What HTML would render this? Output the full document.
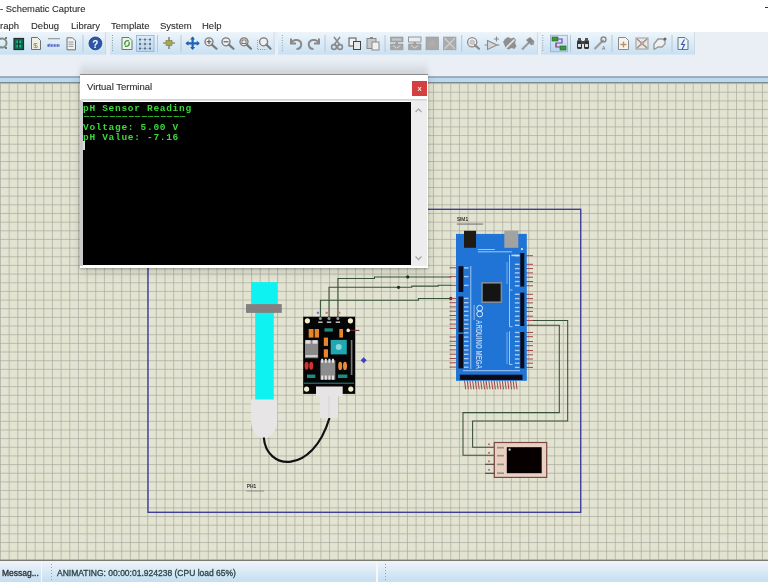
<!DOCTYPE html>
<html><head><meta charset="utf-8">
<style>
html,body{margin:0;padding:0;}
body{width:768px;height:582px;overflow:hidden;position:relative;background:#fff;font-family:"Liberation Sans",sans-serif;}
#wrap{position:absolute;left:0;top:0;width:768px;height:582px;background:#fff;filter:blur(0.35px);}
.a{position:absolute;}
.t{position:absolute;white-space:nowrap;color:#222;}
.term{position:absolute;left:83px;font-family:"Liberation Mono",monospace;font-weight:bold;font-size:9.5px;letter-spacing:0.7px;line-height:10px;color:#3ad83a;white-space:pre;}
</style></head><body><div id="wrap">
<div class="t" style="left:0;top:3px;font-size:9.4px;color:#2a2a2a;-webkit-text-stroke:0.08px #2a2a2a;">- Schematic Capture</div>
<div class="a" style="left:764.5px;top:7px;width:4px;height:1.2px;background:#333;"></div>
<div class="t" style="left:0;top:20px;font-size:9.5px;color:#2a2a2a;-webkit-text-stroke:0.08px #2a2a2a;">raph</div>
<div class="t" style="left:31px;top:20px;font-size:9.5px;color:#2a2a2a;-webkit-text-stroke:0.08px #2a2a2a;">Debug</div>
<div class="t" style="left:71px;top:20px;font-size:9.5px;color:#2a2a2a;-webkit-text-stroke:0.08px #2a2a2a;">Library</div>
<div class="t" style="left:111px;top:20px;font-size:9.5px;color:#2a2a2a;-webkit-text-stroke:0.08px #2a2a2a;">Template</div>
<div class="t" style="left:160px;top:20px;font-size:9.5px;color:#2a2a2a;-webkit-text-stroke:0.08px #2a2a2a;">System</div>
<div class="t" style="left:202px;top:20px;font-size:9.5px;color:#2a2a2a;-webkit-text-stroke:0.08px #2a2a2a;">Help</div>
<div class="a" style="left:0;top:31.7px;width:768px;height:45.5px;background:#e9eff4;"></div>
<svg class="a" style="left:0;top:0" width="768" height="582" viewBox="0 0 768 582">
<defs><linearGradient id="tbg" x1="0" y1="0" x2="0" y2="1"><stop offset="0" stop-color="#eef5fb"/><stop offset="1" stop-color="#c9e0f2"/></linearGradient><linearGradient id="hbg" x1="0" y1="0" x2="0" y2="1"><stop offset="0" stop-color="#dbeaf7"/><stop offset="1" stop-color="#b9d6ef"/></linearGradient></defs><rect x="0" y="32.2" width="106" height="22.4" fill="url(#tbg)"/><rect x="105.2" y="32.2" width="0.8" height="22.4" fill="#c6d6e2"/><rect x="110.2" y="32.2" width="164.3" height="22.4" fill="url(#tbg)"/><rect x="273.7" y="32.2" width="0.8" height="22.4" fill="#c6d6e2"/><rect x="278.1" y="32.2" width="259.9" height="22.4" fill="url(#tbg)"/><rect x="537.2" y="32.2" width="0.8" height="22.4" fill="#c6d6e2"/><rect x="541" y="32.2" width="153.79999999999995" height="22.4" fill="url(#tbg)"/><rect x="694.0" y="32.2" width="0.8" height="22.4" fill="#c6d6e2"/><circle cx="2" cy="43" r="4.5" fill="none" stroke="#7d8f80" stroke-width="2"/><circle cx="6" cy="38" r="1" fill="#556"/><circle cx="6" cy="48" r="1" fill="#556"/><rect x="14" y="38.5" width="9.5" height="11" fill="#0d6e50" stroke="#203030" stroke-width="1.2"/><rect x="16.5" y="40.5" width="4.5" height="7" fill="#19b889"/><path d="M18.7 40v8M16 44h5.5" stroke="#0a2a20" stroke-width="1"/><path d="M31.5 37.5h6l3 3v9h-9z" fill="#f2f0e2" stroke="#707070" stroke-width="1"/><text x="33.3" y="47.5" font-size="8" font-family="Liberation Sans" fill="#80804a">$</text><rect x="48" y="38" width="12" height="1.3" fill="#9aa2a6"/><path d="M47.5 45.5h12.5" stroke="#5366c4" stroke-width="2.4" stroke-dasharray="2.2 0.8"/><path d="M48 45.5l2-2" stroke="#5366c4" stroke-width="1"/><path d="M67 37.8h5.5l3 3v9h-8.5z" fill="#f2f2f2" stroke="#707070" stroke-width="1"/><path d="M68.5 42h5M68.5 44.2h5M68.5 46.4h5" stroke="#8a8a8a" stroke-width="0.9"/><rect x="82.5" y="35" width="1" height="17" fill="#b8c8d4"/><circle cx="95.4" cy="43.4" r="6.4" fill="#2e56a6"/><circle cx="95.4" cy="43.4" r="6.4" fill="none" stroke="#1c3c80" stroke-width="0.8"/><text x="92.2" y="47.5" font-size="10" font-weight="bold" font-family="Liberation Sans" fill="#fff">?</text><rect x="112.0" y="35.0" width="1" height="1" fill="#8aa0b0"/><rect x="112.0" y="37.5" width="1" height="1" fill="#8aa0b0"/><rect x="112.0" y="40.0" width="1" height="1" fill="#8aa0b0"/><rect x="112.0" y="42.5" width="1" height="1" fill="#8aa0b0"/><rect x="112.0" y="45.0" width="1" height="1" fill="#8aa0b0"/><rect x="112.0" y="47.5" width="1" height="1" fill="#8aa0b0"/><rect x="112.0" y="50.0" width="1" height="1" fill="#8aa0b0"/><path d="M122 37.5h7l3 3v9h-10z" fill="#eef4e8" stroke="#6d7570" stroke-width="1"/><path d="M125 45a3 3 0 0 1 4-4M129 42a3 3 0 0 1-4 4" stroke="#3f9a3f" stroke-width="1.4" fill="none"/><rect x="136.5" y="35.5" width="17.5" height="16" fill="url(#hbg)" stroke="#8db2d0" stroke-width="0.8"/><circle cx="140.0" cy="39.5" r="0.9" fill="#2a3a4a"/><circle cx="140.0" cy="44.0" r="0.9" fill="#2a3a4a"/><circle cx="140.0" cy="48.5" r="0.9" fill="#2a3a4a"/><circle cx="145.0" cy="39.5" r="0.9" fill="#2a3a4a"/><circle cx="145.0" cy="44.0" r="0.9" fill="#2a3a4a"/><circle cx="145.0" cy="48.5" r="0.9" fill="#2a3a4a"/><circle cx="150.0" cy="39.5" r="0.9" fill="#2a3a4a"/><circle cx="150.0" cy="44.0" r="0.9" fill="#2a3a4a"/><circle cx="150.0" cy="48.5" r="0.9" fill="#2a3a4a"/><path d="M140 39.5h10M140 44h10M140 48.5h10M140 39.5v9M145 39.5v9M150 39.5v9" stroke="#7d95aa" stroke-width="0.4"/><rect x="157.0" y="35" width="1" height="17" fill="#b8c8d4"/><path d="M169 37v12M163 43h12" stroke="#6a6a40" stroke-width="1.2"/><rect x="166" y="40.5" width="6" height="5" fill="#a8a850" stroke="#7a7a40" stroke-width="0.6"/><rect x="180.5" y="35" width="1" height="17" fill="#b8c8d4"/><path d="M192.6 37.5v11.5M186.5 43.3h12.5" stroke="#2463b4" stroke-width="2.2"/><path d="M192.6 36.5l-2.5 3h5zM192.6 50l-2.5-3h5zM185.5 43.3l3-2.5v5zM199.8 43.3l-3-2.5v5z" fill="#2463b4"/><circle cx="209" cy="41.8" r="4" fill="#f0f0f0" stroke="#7a7a7a" stroke-width="1.3"/><path d="M211.8 44.599999999999994L216.5 48.8" stroke="#7a7a7a" stroke-width="2.2" stroke-linecap="round"/><path d="M206.6 41.8h4.8M209 39.4v4.8" stroke="#555" stroke-width="1.1"/><circle cx="226" cy="41.8" r="4" fill="#f0f0f0" stroke="#7a7a7a" stroke-width="1.3"/><path d="M228.8 44.599999999999994L233.5 48.8" stroke="#7a7a7a" stroke-width="2.2" stroke-linecap="round"/><path d="M223.6 41.8h4.8" stroke="#555" stroke-width="1.1"/><circle cx="244" cy="41.8" r="4" fill="#f0f0f0" stroke="#7a7a7a" stroke-width="1.3"/><path d="M246.8 44.599999999999994L251 48.8" stroke="#7a7a7a" stroke-width="2.2" stroke-linecap="round"/><rect x="242" y="40" width="4" height="3.6" fill="none" stroke="#666" stroke-width="0.9"/><path d="M257.5 40v9.5h9" fill="none" stroke="#888" stroke-width="0.8" stroke-dasharray="1 1"/><circle cx="263.6" cy="41.8" r="4" fill="#f0f0f0" stroke="#7a7a7a" stroke-width="1.3"/><path d="M266.40000000000003 44.599999999999994L270.5 48.8" stroke="#7a7a7a" stroke-width="2.2" stroke-linecap="round"/><rect x="281.8" y="35.0" width="1" height="1" fill="#8aa0b0"/><rect x="281.8" y="37.5" width="1" height="1" fill="#8aa0b0"/><rect x="281.8" y="40.0" width="1" height="1" fill="#8aa0b0"/><rect x="281.8" y="42.5" width="1" height="1" fill="#8aa0b0"/><rect x="281.8" y="45.0" width="1" height="1" fill="#8aa0b0"/><rect x="281.8" y="47.5" width="1" height="1" fill="#8aa0b0"/><rect x="281.8" y="50.0" width="1" height="1" fill="#8aa0b0"/><path d="M291 38.5v5h5M291.5 43a5 4.5 0 1 1 5 6" fill="none" stroke="#8a8a8a" stroke-width="2"/><path d="M319 38.5v5h-5M318.5 43a5 4.5 0 1 0 -5 6" fill="none" stroke="#8a8a8a" stroke-width="2"/><rect x="324.5" y="35" width="1" height="17" fill="#b8c8d4"/><path d="M334 37l6 8M340 37l-6 8" stroke="#8a8a8a" stroke-width="1.6"/><circle cx="334" cy="47" r="2.4" fill="none" stroke="#8a8a8a" stroke-width="1.6"/><circle cx="340" cy="47" r="2.4" fill="none" stroke="#8a8a8a" stroke-width="1.6"/><rect x="349" y="38" width="7" height="8" fill="#f2f2f2" stroke="#555" stroke-width="1"/><rect x="353.5" y="41.5" width="7" height="8" fill="#e8e8e8" stroke="#444" stroke-width="1"/><rect x="367" y="38.5" width="9" height="10" fill="#c8c8c8" stroke="#8a8a8a" stroke-width="1"/><rect x="370" y="37" width="3" height="2" fill="#8a8a8a"/><rect x="372" y="42" width="7" height="8" fill="#f0f0f0" stroke="#8a8a8a" stroke-width="1"/><rect x="384.5" y="35" width="1" height="17" fill="#b8c8d4"/><rect x="390.5" y="37" width="12.5" height="5" fill="#a6a6a6" stroke="#959595" stroke-width="0.6"/><rect x="395.5" y="42" width="2.5" height="2" fill="#a0a0a0"/><path d="M390.5 44h12.5v5.8h-12.5z" fill="#a6a6a6" stroke="#959595" stroke-width="0.6"/><path d="M393 45.5l3.7 2.6 3.7-2.6" stroke="#d8d8d8" stroke-width="1" fill="none"/><rect x="392" y="38.3" width="9.5" height="2.4" fill="#c4c4c4"/><rect x="408.5" y="37" width="12.5" height="5" fill="#e8ecef" stroke="#969696" stroke-width="1"/><rect x="413.5" y="42" width="2.5" height="2" fill="#a0a0a0"/><path d="M408.5 44h12.5v5.8h-12.5z" fill="#a6a6a6" stroke="#959595" stroke-width="0.6"/><path d="M411 45.5l3.7 2.6 3.7-2.6" stroke="#d8d8d8" stroke-width="1" fill="none"/><rect x="426" y="37" width="12.5" height="12.8" fill="#a9a9a9" stroke="#9a9a9a" stroke-width="0.6"/><circle cx="432.2" cy="43.4" r="3.2" fill="#b4acac"/><rect x="443.5" y="37" width="12.5" height="12.8" fill="#acacac" stroke="#9a9a9a" stroke-width="0.6"/><path d="M444.5 38l10.5 10.8M455 38l-10.5 10.8" stroke="#d2d2d2" stroke-width="1.1"/><rect x="461.2" y="35" width="1" height="17" fill="#b8c8d4"/><circle cx="472.2" cy="42.3" r="4.6" fill="#f0f0f0" stroke="#8a8a8a" stroke-width="1.3"/><path d="M475.0 45.099999999999994L479 48.8" stroke="#8a8a8a" stroke-width="2.2" stroke-linecap="round"/><circle cx="472.2" cy="42.3" r="2.3" fill="#d0c8c8" stroke="#b0a8a8" stroke-width="0.6"/><path d="M487.5 40.5l9.5 4.5-9.5 4.5z" fill="#d8d8d8" stroke="#8a8a8a" stroke-width="1.1"/><path d="M484.5 45h3M497 45h2.5M496.5 36.5v5M494 39h5" stroke="#8a8a8a" stroke-width="1.1" fill="none"/><path d="M505 39l3-2 3 1.5 3-1 2 2.5-1 3 1.5 3-2 3-3-1-3 1.5-3-1.5-1-3-1.5-3z" fill="#909090"/><path d="M505.5 48.5l9-9" stroke="#e8e8e8" stroke-width="1.6"/><path d="M522 49.5l7.5-7.5" stroke="#9a9a9a" stroke-width="2.2"/><path d="M526 40l4-3 4.5 4.5-3 4z" fill="#8a8a8a"/><circle cx="532.5" cy="43.5" r="1.6" fill="#9a9a9a"/><rect x="542.2" y="35.0" width="1" height="1" fill="#8aa0b0"/><rect x="542.2" y="37.5" width="1" height="1" fill="#8aa0b0"/><rect x="542.2" y="40.0" width="1" height="1" fill="#8aa0b0"/><rect x="542.2" y="42.5" width="1" height="1" fill="#8aa0b0"/><rect x="542.2" y="45.0" width="1" height="1" fill="#8aa0b0"/><rect x="542.2" y="47.5" width="1" height="1" fill="#8aa0b0"/><rect x="542.2" y="50.0" width="1" height="1" fill="#8aa0b0"/><rect x="550.5" y="35.3" width="17" height="16.5" fill="url(#hbg)" stroke="#8db2d0" stroke-width="0.8"/><rect x="552" y="37" width="6" height="4" fill="#3a9a3a" stroke="#1e5e1e" stroke-width="0.6"/><rect x="560" y="46" width="6" height="4" fill="#3a9a3a" stroke="#1e5e1e" stroke-width="0.6"/><path d="M558 39h4v4h-6v4h4" fill="none" stroke="#7040a0" stroke-width="1.1"/><path d="M556 43v4" stroke="#c04040" stroke-width="1"/><rect x="570.0" y="35" width="1" height="17" fill="#b8c8d4"/><rect x="577" y="40" width="5" height="9" rx="1.5" fill="#333"/><rect x="584" y="40" width="5" height="9" rx="1.5" fill="#333"/><rect x="578" y="38" width="3" height="3" fill="#555"/><rect x="585" y="38" width="3" height="3" fill="#555"/><rect x="581" y="41" width="4" height="3" fill="#444"/><rect x="578" y="44" width="3" height="3" fill="#ddd"/><rect x="585" y="44" width="3" height="3" fill="#ddd"/><path d="M594.5 49l9-9" stroke="#9a9a9a" stroke-width="2.2"/><circle cx="603.5" cy="39.5" r="2.5" fill="none" stroke="#8a8a8a" stroke-width="1.4"/><text x="602" y="50" font-size="5" fill="#666" font-family="Liberation Sans">A</text><rect x="611.5" y="35" width="1" height="17" fill="#b8c8d4"/><path d="M618.5 37.5h7l3 3v9h-10z" fill="#f4f4f2" stroke="#8a8a8a" stroke-width="1"/><path d="M623.5 41.5v6M620.5 44.5h6" stroke="#c89050" stroke-width="1.3"/><rect x="636" y="38" width="12" height="11" fill="#e8e8e8" stroke="#9a9a9a" stroke-width="1"/><path d="M637 39l10 9M647 39l-10 9" stroke="#9a8a7a" stroke-width="1.3"/><circle cx="642" cy="43.5" r="2" fill="#c0a0a0"/><path d="M654 49v-5l4-5h5l2 2v3l-3 3h-4l-3 2z" fill="#f0f0f0" stroke="#9a9a9a" stroke-width="1.4"/><circle cx="665" cy="39" r="1.5" fill="#666"/><rect x="671.5" y="35" width="1" height="17" fill="#b8c8d4"/><path d="M678 37.5h7l3 3v9h-10z" fill="#eef2f6" stroke="#6a7680" stroke-width="1"/><path d="M684.5 39.5l-3 5h3l-2.5 5" stroke="#2a5ab0" stroke-width="1.1" fill="none"/>
<rect x="0" y="77" width="768" height="484" fill="#e3e3d2"/>
<rect x="0" y="76.5" width="768" height="1.2" fill="#5d7686"/>
<rect x="0" y="77.7" width="768" height="4.5" fill="#b9d9ef"/>
<rect x="0" y="82" width="768" height="1.2" fill="#7e8b90"/>
<path d="M0.49 83V560M9.15 83V560M17.81 83V560M26.47 83V560M35.13 83V560M43.79 83V560M52.45 83V560M61.10 83V560M69.76 83V560M78.42 83V560M87.08 83V560M95.74 83V560M104.40 83V560M113.06 83V560M121.72 83V560M130.38 83V560M139.04 83V560M147.69 83V560M156.35 83V560M165.01 83V560M173.67 83V560M182.33 83V560M190.99 83V560M199.65 83V560M208.31 83V560M216.97 83V560M225.63 83V560M234.28 83V560M242.94 83V560M251.60 83V560M260.26 83V560M268.92 83V560M277.58 83V560M286.24 83V560M294.90 83V560M303.56 83V560M312.21 83V560M320.87 83V560M329.53 83V560M338.19 83V560M346.85 83V560M355.51 83V560M364.17 83V560M372.83 83V560M381.49 83V560M390.15 83V560M398.81 83V560M407.46 83V560M416.12 83V560M424.78 83V560M433.44 83V560M442.10 83V560M450.76 83V560M459.42 83V560M468.08 83V560M476.74 83V560M485.40 83V560M494.05 83V560M502.71 83V560M511.37 83V560M520.03 83V560M528.69 83V560M537.35 83V560M546.01 83V560M554.67 83V560M563.33 83V560M571.99 83V560M580.64 83V560M589.30 83V560M597.96 83V560M606.62 83V560M615.28 83V560M623.94 83V560M632.60 83V560M641.26 83V560M649.92 83V560M658.58 83V560M667.23 83V560M675.89 83V560M684.55 83V560M693.21 83V560M701.87 83V560M710.53 83V560M719.19 83V560M727.85 83V560M736.51 83V560M745.17 83V560M753.82 83V560M762.48 83V560M0 83.59H768M0 92.25H768M0 100.91H768M0 109.57H768M0 118.23H768M0 126.89H768M0 135.55H768M0 144.20H768M0 152.86H768M0 161.52H768M0 170.18H768M0 178.84H768M0 187.50H768M0 196.16H768M0 204.82H768M0 213.48H768M0 222.14H768M0 230.79H768M0 239.45H768M0 248.11H768M0 256.77H768M0 265.43H768M0 274.09H768M0 282.75H768M0 291.41H768M0 300.07H768M0 308.73H768M0 317.38H768M0 326.04H768M0 334.70H768M0 343.36H768M0 352.02H768M0 360.68H768M0 369.34H768M0 378.00H768M0 386.66H768M0 395.31H768M0 403.97H768M0 412.63H768M0 421.29H768M0 429.95H768M0 438.61H768M0 447.27H768M0 455.93H768M0 464.59H768M0 473.25H768M0 481.91H768M0 490.56H768M0 499.22H768M0 507.88H768M0 516.54H768M0 525.20H768M0 533.86H768M0 542.52H768M0 551.18H768M0 559.84H768" stroke="#a9ab9f" stroke-width="0.7" fill="none"/>
<rect x="0" y="559.8" width="768" height="1.4" fill="#7a7a72"/>
<rect x="148" y="209.3" width="432.7" height="303" fill="none" stroke="#40409a" stroke-width="1.4"/><path d="M337.9 318V278.4H374.5V276.9H451.2M329 318V287.3H411.8V286.1H438.2V285.3H451.2M320.4 318V300.3H418.4V298.4H451.2M528 320.5H567.7V420.9H472.6V447.2H494.3M528 325.3H559.3V412.6H463V455.3H494.3" fill="none" stroke="#36503a" stroke-width="1.05"/><circle cx="407.7" cy="276.9" r="1.6" fill="#1e301e"/><circle cx="398.5" cy="287.3" r="1.6" fill="#1e301e"/><circle cx="450.8" cy="298.4" r="1.6" fill="#1e301e"/><rect x="251.2" y="282.1" width="26.2" height="22.5" fill="#0ff2f2"/><rect x="255.2" y="312" width="18.6" height="88" fill="#0ff2f2"/><rect x="246" y="304.1" width="35.8" height="8.8" fill="#838080"/><path d="M251 399.4H277.2V419C277.2 431 270.5 438.6 264 438.6C257.5 438.6 251 431 251 419Z" fill="#e7e5e6"/><path d="M263.8 437.5C266 470 312 476 329.5 418" fill="none" stroke="#111" stroke-width="2.2"/><rect x="303.2" y="316.7" width="51.9" height="77.2" fill="#050505"/><circle cx="307.4" cy="320.8" r="2.6" fill="#f4f0cc"/><circle cx="350.4" cy="320.8" r="2.6" fill="#f4f0cc"/><circle cx="306.6" cy="389.1" r="2.6" fill="#f4f0cc"/><circle cx="350.8" cy="389.1" r="2.6" fill="#f4f0cc"/><circle cx="320.4" cy="318.6" r="1.5" fill="#9a9a9a"/><rect x="318.2" y="321.5" width="4.4" height="1.4" fill="#cfcfcf"/><circle cx="329" cy="318.6" r="1.5" fill="#9a9a9a"/><rect x="326.8" y="321.5" width="4.4" height="1.4" fill="#cfcfcf"/><circle cx="337.9" cy="318.6" r="1.5" fill="#9a9a9a"/><rect x="335.7" y="321.5" width="4.4" height="1.4" fill="#cfcfcf"/><rect x="316.8" y="311.8" width="2.2" height="2" fill="#8a6ad0"/><rect x="325.6" y="311.8" width="2.2" height="2" fill="#e07070"/><rect x="338.2" y="311.8" width="2.2" height="2" fill="#e07070"/><rect x="308.7" y="329" width="4.8" height="8.6" fill="#e8842a"/><rect x="314.7" y="329" width="4.3" height="8.6" fill="#e8842a"/><rect x="339.3" y="329" width="3.7" height="8.6" fill="#e8842a"/><rect x="323.8" y="337.6" width="4.2" height="8.3" fill="#e8842a"/><rect x="323.8" y="349.3" width="4.2" height="8.1" fill="#e8842a"/><rect x="324.5" y="328.3" width="8.3" height="3.3" fill="#1e8a80"/><rect x="330.7" y="339.9" width="16.1" height="14.5" fill="#1fa8b0"/><circle cx="338.7" cy="347" r="3" fill="#8ad8d8"/><rect x="305" y="340.2" width="13.2" height="18" fill="#8a8a8a"/><rect x="305.5" y="340.2" width="5" height="3.5" fill="#e0e0e0"/><rect x="312.5" y="340.2" width="5" height="3.5" fill="#e0e0e0"/><rect x="305.5" y="355" width="12" height="2" fill="#d0d0d0"/><ellipse cx="306.6" cy="365.7" rx="2" ry="4" fill="#d83030"/><ellipse cx="311.2" cy="365.7" rx="2" ry="4" fill="#d83030"/><rect x="320.4" y="360.3" width="14.9" height="19.4" fill="#8c8c8c"/><rect x="321.2" y="358.8" width="2" height="4" fill="#e4e4e4"/><rect x="321.2" y="375.5" width="2" height="4.2" fill="#e4e4e4"/><rect x="324.8" y="358.8" width="2" height="4" fill="#e4e4e4"/><rect x="324.8" y="375.5" width="2" height="4.2" fill="#e4e4e4"/><rect x="328.4" y="358.8" width="2" height="4" fill="#e4e4e4"/><rect x="328.4" y="375.5" width="2" height="4.2" fill="#e4e4e4"/><rect x="332.0" y="358.8" width="2" height="4" fill="#e4e4e4"/><rect x="332.0" y="375.5" width="2" height="4.2" fill="#e4e4e4"/><ellipse cx="340.2" cy="365.9" rx="2" ry="4.2" fill="#e88a3a"/><ellipse cx="345" cy="365.9" rx="2" ry="4.2" fill="#e88a3a"/><rect x="307" y="374.5" width="8.3" height="3.5" fill="#1e8a80"/><rect x="337.9" y="374.5" width="9.5" height="3.5" fill="#1e8a80"/><rect x="304" y="382.6" width="50" height="1.3" fill="#1e8a80" opacity="0.8"/><rect x="350.8" y="340" width="1.6" height="35" fill="#c8c8c8" opacity="0.6"/><circle cx="348.2" cy="330.4" r="1.8" fill="#e8e8e8"/><path d="M350 330.4H359.4" stroke="#6a3030" stroke-width="1"/><path d="M363.7 357.3l3 3-3 3-3-3z" fill="#4040c0"/><rect x="316" y="386.5" width="26.7" height="9.8" fill="#e6e4e4"/><rect x="319.9" y="396" width="18.1" height="22" fill="#e6e4e4"/><path d="M329 396V418" stroke="#cfcfcf" stroke-width="0.8"/><text x="246.8" y="488.4" font-size="5.6" font-family="Liberation Sans" fill="#2a2a2a" stroke="#2a2a2a" stroke-width="0.15" textLength="9.4" lengthAdjust="spacingAndGlyphs">PH1</text><rect x="246.5" y="490.5" width="17.5" height="1.1" fill="#555" opacity="0.45"/><text x="456.7" y="221.3" font-size="6" font-family="Liberation Sans" fill="#2a2a2a" stroke="#2a2a2a" stroke-width="0.15" textLength="11.5" lengthAdjust="spacingAndGlyphs">SIM1</text><rect x="456.8" y="223.2" width="26.3" height="1.8" fill="#666" opacity="0.55"/><path d="M449.5 267.8H458.6M449.5 276.6H458.6M449.5 285.4H458.6M449.5 298.4H458.6M449.5 302.7H458.6M449.5 306.9H458.6M449.5 311.2H458.6M449.5 315.5H458.6M449.5 319.8H458.6M449.5 324.1H458.6M449.5 328.4H458.6M449.5 337H458.6M449.5 341.3H458.6M449.5 345.6H458.6M449.5 349.9H458.6M449.5 354.2H458.6M449.5 358.5H458.6M449.5 362.8H458.6M449.5 367.1H458.6M524.2 255.7H533M524.2 264.3H533M524.2 268.6H533M524.2 272.9H533M524.2 277.2H533M524.2 281.5H533M524.2 285.8H533M524.2 294.3H533M524.2 298.6H533M524.2 302.9H533M524.2 307.5H533M524.2 311.4H533M524.2 316.2H533M524.2 320.5H533M524.2 325.3H533M524.2 332.5H533M524.2 336.7H533M524.2 341.5H533M524.2 345.7H533M524.2 350.5H533M524.2 354.8H533M524.2 359H533M524.2 363.2H533M524.2 367.4H533M464.5 380.5L465.7 389.3M467.2 380.5L468.4 389.3M469.9 380.5L471.1 389.3M472.6 380.5L473.8 389.3M475.3 380.5L476.5 389.3M478.0 380.5L479.2 389.3M480.7 380.5L481.9 389.3M483.4 380.5L484.6 389.3M486.1 380.5L487.3 389.3M488.8 380.5L490.0 389.3M491.5 380.5L492.7 389.3M494.2 380.5L495.4 389.3M496.9 380.5L498.1 389.3M499.6 380.5L500.8 389.3M502.3 380.5L503.5 389.3M505.0 380.5L506.2 389.3M507.7 380.5L508.9 389.3M510.4 380.5L511.6 389.3M513.1 380.5L514.3 389.3M515.8 380.5L517.0 389.3" stroke="#a04848" stroke-width="1"/><rect x="456" y="233.9" width="70.8" height="146.9" fill="#1f74d6"/><rect x="464" y="230.8" width="12" height="17" fill="#201a14"/><rect x="504.3" y="230.8" width="14" height="17" fill="#a2a2a2"/><rect x="458.5" y="266.2" width="4.8" height="25.8" fill="#0b0b18"/><rect x="458.5" y="296.5" width="4.8" height="35.8" fill="#0b0b18"/><rect x="458.5" y="334" width="4.8" height="34.4" fill="#0b0b18"/><rect x="520.3" y="253" width="4" height="33.6" fill="#0b0b18"/><rect x="520.3" y="292.6" width="4" height="33.4" fill="#0b0b18"/><rect x="520.3" y="332" width="4" height="36.4" fill="#0b0b18"/><rect x="459.8" y="374.7" width="62.7" height="5.2" fill="#0b0b18"/><rect x="481.2" y="282" width="21" height="21" fill="#7c8c9c"/><rect x="482.8" y="283.6" width="17.8" height="17.8" fill="#141414"/><path d="M470.8 266v103M463 370.7h57M509.5 255v71.7h3M509.5 331.3v33.2h3M509.5 290h3" fill="none" stroke="#d6e8fa" stroke-width="0.8" opacity="0.9"/><rect x="477.8" y="249" width="17" height="1" fill="#cfe4f8" opacity="0.75"/><rect x="477.8" y="251.3" width="34" height="1" fill="#cfe4f8" opacity="0.75"/><rect x="511.5" y="254.6" width="7.8" height="1.6" fill="#e0ecf8" opacity="0.8"/><rect x="521" y="248.2" width="1.8" height="1.8" fill="#e8f0f8"/><rect x="464" y="267.2" width="4.5" height="1.4" fill="#d8e8f8" opacity="0.75"/><rect x="464" y="275.9" width="4.5" height="1.4" fill="#d8e8f8" opacity="0.75"/><rect x="464" y="284.7" width="4.5" height="1.4" fill="#d8e8f8" opacity="0.75"/><rect x="464" y="297.7" width="4.5" height="1.4" fill="#d8e8f8" opacity="0.75"/><rect x="464" y="302.0" width="4.5" height="1.4" fill="#d8e8f8" opacity="0.75"/><rect x="464" y="306.3" width="4.5" height="1.4" fill="#d8e8f8" opacity="0.75"/><rect x="464" y="310.6" width="4.5" height="1.4" fill="#d8e8f8" opacity="0.75"/><rect x="464" y="314.9" width="4.5" height="1.4" fill="#d8e8f8" opacity="0.75"/><rect x="464" y="319.2" width="4.5" height="1.4" fill="#d8e8f8" opacity="0.75"/><rect x="464" y="323.5" width="4.5" height="1.4" fill="#d8e8f8" opacity="0.75"/><rect x="464" y="327.8" width="4.5" height="1.4" fill="#d8e8f8" opacity="0.75"/><rect x="464" y="332.1" width="4.5" height="1.4" fill="#d8e8f8" opacity="0.75"/><rect x="464" y="336.4" width="4.5" height="1.4" fill="#d8e8f8" opacity="0.75"/><rect x="464" y="340.7" width="4.5" height="1.4" fill="#d8e8f8" opacity="0.75"/><rect x="464" y="345.0" width="4.5" height="1.4" fill="#d8e8f8" opacity="0.75"/><rect x="464" y="349.3" width="4.5" height="1.4" fill="#d8e8f8" opacity="0.75"/><rect x="464" y="353.6" width="4.5" height="1.4" fill="#d8e8f8" opacity="0.75"/><rect x="464" y="357.9" width="4.5" height="1.4" fill="#d8e8f8" opacity="0.75"/><rect x="464" y="362.2" width="4.5" height="1.4" fill="#d8e8f8" opacity="0.75"/><rect x="464" y="366.5" width="4.5" height="1.4" fill="#d8e8f8" opacity="0.75"/><rect x="514.9" y="255.0" width="4.6" height="1.4" fill="#d8e8f8" opacity="0.75"/><rect x="514.9" y="263.6" width="4.6" height="1.4" fill="#d8e8f8" opacity="0.75"/><rect x="514.9" y="267.9" width="4.6" height="1.4" fill="#d8e8f8" opacity="0.75"/><rect x="514.9" y="272.2" width="4.6" height="1.4" fill="#d8e8f8" opacity="0.75"/><rect x="514.9" y="276.5" width="4.6" height="1.4" fill="#d8e8f8" opacity="0.75"/><rect x="514.9" y="280.8" width="4.6" height="1.4" fill="#d8e8f8" opacity="0.75"/><rect x="514.9" y="285.1" width="4.6" height="1.4" fill="#d8e8f8" opacity="0.75"/><rect x="514.9" y="293.6" width="4.6" height="1.4" fill="#d8e8f8" opacity="0.75"/><rect x="514.9" y="297.9" width="4.6" height="1.4" fill="#d8e8f8" opacity="0.75"/><rect x="514.9" y="302.2" width="4.6" height="1.4" fill="#d8e8f8" opacity="0.75"/><rect x="514.9" y="306.8" width="4.6" height="1.4" fill="#d8e8f8" opacity="0.75"/><rect x="514.9" y="310.7" width="4.6" height="1.4" fill="#d8e8f8" opacity="0.75"/><rect x="514.9" y="315.5" width="4.6" height="1.4" fill="#d8e8f8" opacity="0.75"/><rect x="514.9" y="319.8" width="4.6" height="1.4" fill="#d8e8f8" opacity="0.75"/><rect x="514.9" y="324.6" width="4.6" height="1.4" fill="#d8e8f8" opacity="0.75"/><rect x="514.9" y="331.8" width="4.6" height="1.4" fill="#d8e8f8" opacity="0.75"/><rect x="514.9" y="336.0" width="4.6" height="1.4" fill="#d8e8f8" opacity="0.75"/><rect x="514.9" y="340.8" width="4.6" height="1.4" fill="#d8e8f8" opacity="0.75"/><rect x="514.9" y="345.0" width="4.6" height="1.4" fill="#d8e8f8" opacity="0.75"/><rect x="514.9" y="349.8" width="4.6" height="1.4" fill="#d8e8f8" opacity="0.75"/><rect x="514.9" y="354.1" width="4.6" height="1.4" fill="#d8e8f8" opacity="0.75"/><rect x="514.9" y="358.3" width="4.6" height="1.4" fill="#d8e8f8" opacity="0.75"/><rect x="514.9" y="362.5" width="4.6" height="1.4" fill="#d8e8f8" opacity="0.75"/><rect x="514.9" y="366.7" width="4.6" height="1.4" fill="#d8e8f8" opacity="0.75"/><text transform="translate(476 320) rotate(90)" font-size="8.6" font-family="Liberation Sans" font-weight="bold" fill="#d8e8f8" opacity="0.8" textLength="49" lengthAdjust="spacingAndGlyphs">ARDUINO MEGA</text><circle cx="479.7" cy="308.2" r="2.9" fill="none" stroke="#d8e8f8" stroke-width="1"/><circle cx="479.7" cy="314" r="2.9" fill="none" stroke="#d8e8f8" stroke-width="1"/><rect x="473.6" y="305" width="1" height="15" fill="#d8e8f8" opacity="0.6"/><rect x="506.5" y="332" width="1" height="32" fill="#d8e8f8" opacity="0.5"/><rect x="506.5" y="262" width="1" height="22" fill="#d8e8f8" opacity="0.5"/><rect x="494.3" y="442.5" width="52.4" height="34.9" fill="#e9d0c2" stroke="#7a4a42" stroke-width="1.2"/><rect x="506.8" y="447.2" width="34.9" height="26" fill="#060000"/><rect x="508.6" y="448.6" width="2" height="2" fill="#d8d8c8"/><path d="M485 464.2H494.3M485 473.2H494.3" stroke="#3a3030" stroke-width="1.1"/><rect x="497" y="446.9" width="7" height="1.6" fill="#6a7a5a" opacity="0.7"/><rect x="497" y="454.9" width="7" height="1.6" fill="#6a7a5a" opacity="0.7"/><rect x="497" y="463.59999999999997" width="7" height="1.6" fill="#6a7a5a" opacity="0.7"/><rect x="497" y="472.4" width="7" height="1.6" fill="#6a7a5a" opacity="0.7"/><rect x="488" y="443.5" width="2" height="1.6" fill="#e04040" opacity="0.8"/><rect x="488" y="452" width="2" height="1.6" fill="#e04040" opacity="0.8"/><rect x="488" y="460.5" width="2" height="1.6" fill="#e04040" opacity="0.8"/><rect x="488" y="469" width="2" height="1.6" fill="#707070" opacity="0.8"/>
</svg>
<div class="a" style="left:80px;top:60px;width:348px;height:15px;background:linear-gradient(rgba(60,70,80,0),rgba(60,70,80,.14));filter:blur(2px);"></div>
<div class="a" style="left:80px;top:74px;width:347.5px;height:193.5px;background:#fff;box-shadow:0 1px 2px rgba(0,0,0,.25),0 3px 10px rgba(0,0,0,.14);"></div>
<div class="a" style="left:79.6px;top:100px;width:3.2px;height:165.5px;background:#c9c9c9;"></div>
<div class="a" style="left:80px;top:74px;width:347.5px;height:1px;background:#8a8a8a;"></div>
<div class="t" style="left:87px;top:81px;font-size:9.5px;color:#2e2e2e;-webkit-text-stroke:0.12px #2e2e2e;">Virtual Terminal</div>
<div class="a" style="left:412px;top:81px;width:15px;height:15px;background:#d3403f;"></div>
<div class="t" style="left:417.5px;top:83.5px;font-size:7.5px;font-weight:bold;color:#f4e8e0;">x</div>
<div class="a" style="left:81px;top:99px;width:346px;height:2px;background:linear-gradient(#d0d0d0,#e4e4e4);"></div>
<div class="a" style="left:82.5px;top:101.5px;width:328.5px;height:163.5px;background:#000;"></div>
<div class="a" style="left:411px;top:101px;width:15.5px;height:165px;background:#ededed;"></div>
<svg class="a" style="left:411px;top:101px" width="16" height="165" viewBox="0 0 16 165"><path d="M4.5 11l3-3 3 3M4.5 155.5l3 3 3-3" fill="none" stroke="#a8a8a8" stroke-width="1.3"/></svg>
<div class="term" style="top:104.3px">pH Sensor Reading</div>
<div class="a" style="left:83.5px;top:116px;width:102px;height:1px;background:repeating-linear-gradient(90deg,#2aa82a 0 5px,#0a300a 5px 6.4px);"></div>
<div class="term" style="top:123.3px">Voltage: 5.00 V</div>
<div class="term" style="top:132.8px">pH Value: -7.16</div>
<div class="a" style="left:83px;top:141.2px;width:1.6px;height:9.2px;background:#dcdcdc;"></div>
<div class="a" style="left:0;top:561px;width:768px;height:21px;background:linear-gradient(#eef4f9,#c4def2);"></div>
<div class="a" style="left:40.5px;top:562px;width:1.5px;height:20px;background:#f4f8fb;"></div>
<div class="a" style="left:50.5px;top:564px;width:1px;height:18px;background:repeating-linear-gradient(#8ea4b4 0 1px,transparent 1px 3px);"></div>
<div class="a" style="left:376px;top:562px;width:1.5px;height:20px;background:#f4f8fb;"></div>
<div class="a" style="left:385px;top:564px;width:1px;height:18px;background:repeating-linear-gradient(#8ea4b4 0 1px,transparent 1px 3px);"></div>
<div class="t" style="left:2px;top:567.5px;font-size:8.5px;color:#2a2f33;-webkit-text-stroke:0.3px #2a2f33;">Messag...</div>
<div class="t" style="left:57px;top:567.5px;font-size:8.5px;color:#2a4448;-webkit-text-stroke:0.3px #2a4448;">ANIMATING: 00:00:01.924238 (CPU load 65%)</div>
</div></body></html>
